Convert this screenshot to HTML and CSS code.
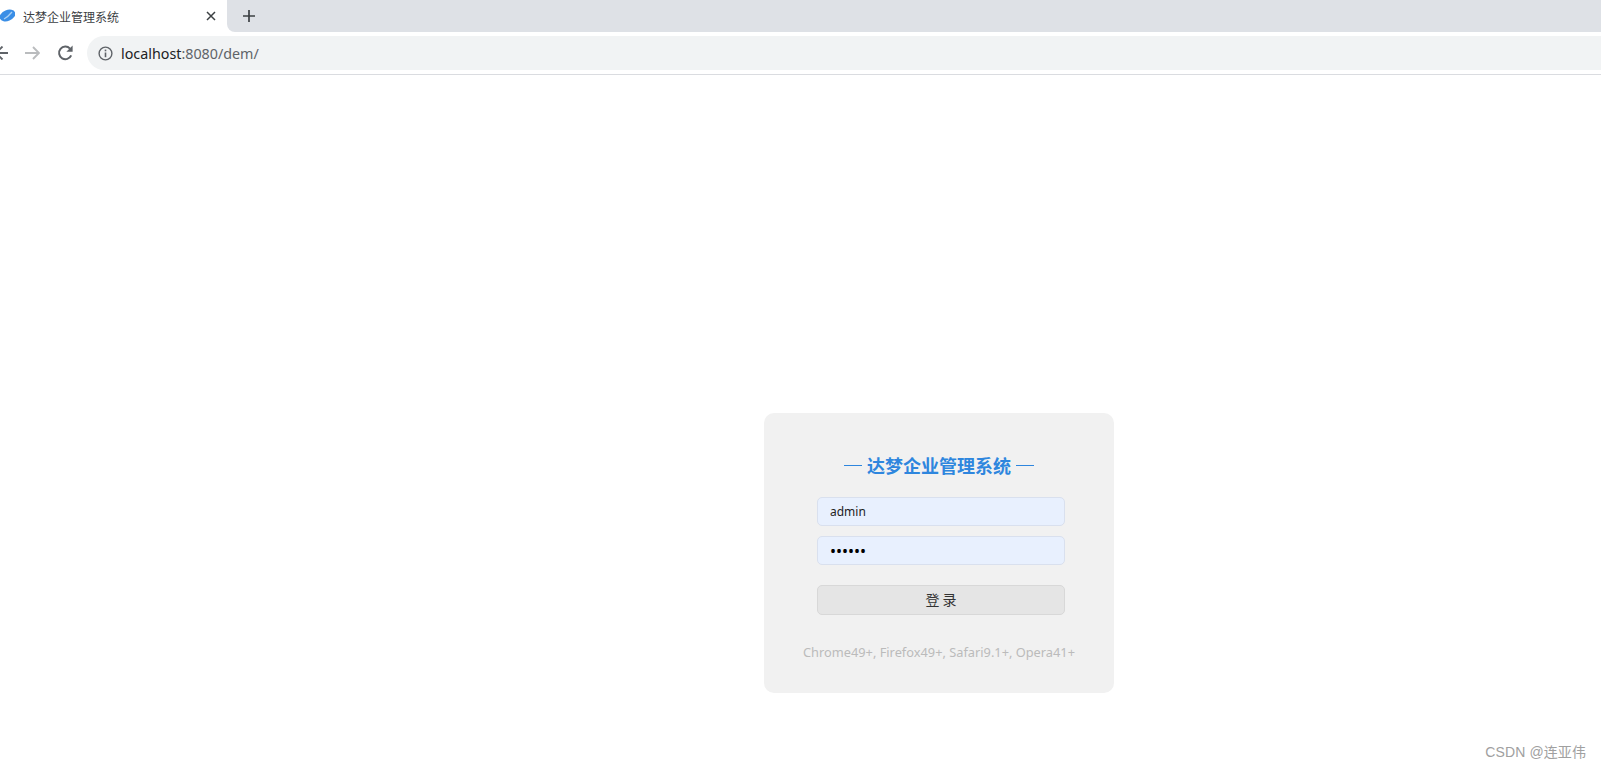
FILE: index.html
```html
<!DOCTYPE html>
<html lang="zh-CN">
<head>
    <meta charset="UTF-8">
    <meta name="viewport" content="width=device-width, initial-scale=1.0">
    <title>达梦企业管理系统</title>
    <link rel="stylesheet" href="styles.css">
</head>
<body>

<!-- 浏览器标签栏 -->
<div class="tab-strip">
    <div class="tab">
        <svg class="favicon" width="15" height="13" viewBox="0 0 15 13">
            <ellipse cx="7.5" cy="6.5" rx="8.2" ry="5.4" transform="rotate(-22 7.5 6.5)" fill="#3a8ee6"/>
            <path d="M4 10 C7 8.5 9.5 6 12 3" stroke="#a9d0f5" stroke-width="1.3" fill="none"/>
        </svg>
        <span class="tab-title">达梦企业管理系统</span>
        <svg class="tab-close" width="10" height="10" viewBox="0 0 10 10">
            <path d="M1 1 L9 9 M9 1 L1 9" stroke="#3c4043" stroke-width="1.5" fill="none"/>
        </svg>
    </div>
    <div class="tab-rest">
        <svg class="new-tab" width="12" height="12" viewBox="0 0 12 12">
            <path d="M6 0 V12 M0 6 H12" stroke="#3c4043" stroke-width="1.7" fill="none"/>
        </svg>
    </div>
</div>

<!-- 地址栏 -->
<div class="toolbar">
    <svg class="nav-back" width="8" height="14" viewBox="0 0 8 14">
        <path d="M8 7 H0 M2.5 0.5 L-1 4 M2.5 13.5 L-1 10" stroke="#5f6368" stroke-width="1.9" fill="none"/>
    </svg>
    <svg class="nav-forward" width="15" height="14" viewBox="0 0 15 14">
        <path d="M0 7 H14 M8 1 L14 7 L8 13" stroke="#babcbe" stroke-width="1.9" fill="none"/>
    </svg>
    <svg class="nav-reload" width="17" height="16" viewBox="0 0 17 16">
        <path d="M14.2 10.4 A6.3 6.3 0 1 1 13 3.6" stroke="#5f6368" stroke-width="2" fill="none"/>
        <path d="M15.6 0.6 V6.8 H9.4 Z" fill="#5f6368"/>
    </svg>
    <div class="address-bar">
        <svg class="info-icon" width="15" height="15" viewBox="0 0 15 15">
            <circle cx="7.5" cy="7.5" r="6.4" stroke="#5f6368" stroke-width="1.4" fill="none"/>
            <path d="M7.5 6.5 V11.2" stroke="#5f6368" stroke-width="1.6"/>
            <path d="M7.5 3.6 V5.3" stroke="#5f6368" stroke-width="1.6"/>
        </svg>
        <span class="url"><span class="url-host">localhost</span>:8080/dem/</span>
    </div>
</div>

<!-- 登录框 -->
<div class="page">
    <div class="login-box">
        <h1 class="login-title"><span class="title-line"></span>达梦企业管理系统<span class="title-line"></span></h1>
        <form class="login-form" onsubmit="return false">
            <input class="login-input" type="text" value="admin">
            <input class="login-input login-password" type="password" value="123456">
            <button class="login-btn">登 录</button>
        </form>
        <p class="browser-tip">Chrome49+, Firefox49+, Safari9.1+, Opera41+</p>
    </div>
</div>

<div class="watermark">CSDN @连亚伟</div>

</body>
</html>
```

FILE: styles.css
```css
html, body {
    margin: 0;
    padding: 0;
    height: 768px;
    overflow: hidden;
    background-color: white;
    font-family: "Noto Sans", "Noto Sans CJK SC", sans-serif;
}
.tab-strip {
    display: flex;
    height: 32px;
    background-color: white;
}
.tab {
    display: flex;
    align-items: center;
    width: 227px;
}
.favicon {
    margin-top: -2px;
}
.tab-title {
    margin-left: 8px;
    font-family: "Noto Sans CJK SC", sans-serif;
    font-size: 12px;
    color: #3c4043;
}
.tab-close {
    margin-left: auto;
    margin-right: 11px;
}
.tab-rest {
    flex: 1;
    display: flex;
    align-items: center;
    padding-left: 16px;
    background-color: #dee1e6;
    border-bottom-left-radius: 8px;
}
.toolbar {
    display: flex;
    align-items: center;
    height: 42px;
    border-bottom: 1px solid #dadce0;
}
.nav-forward {
    margin-left: 17px;
}
.nav-reload {
    margin-left: 17px;
}
.address-bar {
    flex: 1;
    display: flex;
    align-items: center;
    height: 34px;
    margin-left: 13px;
    padding-left: 11px;
    background-color: #f1f3f4;
    border-radius: 17px 0 0 17px;
}
.url {
    margin-left: 8px;
    font-size: 14.3px;
    color: #5f6368;
}
.url-host {
    color: #202124;
}
.page {
    padding: 338px 0 0 764px;
}
.login-box {
    box-sizing: border-box;
    width: 350px;
    height: 280px;
    padding-top: 40px;
    background-color: #f1f1f1;
    border-radius: 10px;
}
.login-title {
    display: flex;
    justify-content: center;
    align-items: center;
    gap: 5px;
    margin: 0;
    font-family: "Noto Sans CJK SC", sans-serif;
    font-size: 18px;
    line-height: 24px;
    font-weight: bold;
    color: #2e86de;
}
.title-line {
    width: 18px;
    height: 1px;
    background-color: #2e86de;
}
.login-form {
    display: flex;
    flex-direction: column;
    gap: 10px;
    width: 248px;
    margin: 20px 0 0 53px;
}
.login-input {
    box-sizing: border-box;
    height: 29px;
    padding: 0 12px;
    border: 1px solid #d9e0ee;
    border-radius: 5px;
    background-color: #e8f0fe;
    font-family: "Noto Sans", sans-serif;
    font-size: 12px;
    color: #222;
    outline: none;
}
.login-password {
    font-size: 16px;
    color: #000;
}
.login-btn {
    height: 30px;
    margin-top: 10px;
    padding: 0 0 2px;
    border: 1px solid #d8d8d8;
    border-radius: 5px;
    background-color: #e5e5e5;
    font-family: "Noto Sans CJK SC", sans-serif;
    font-size: 14px;
    color: #333;
    cursor: pointer;
}
.browser-tip {
    margin: 27px 0 0;
    text-align: center;
    font-family: "Noto Sans", sans-serif;
    font-size: 12.8px;
    line-height: 20px;
    color: #bbb;
}
.watermark {
    position: absolute;
    right: 15px;
    top: 742px;
    font-family: "Liberation Sans", "Noto Sans CJK SC", sans-serif;
    font-size: 14px;
    line-height: 20px;
    letter-spacing: 0.1px;
    color: #a0a0a0;
}
```
